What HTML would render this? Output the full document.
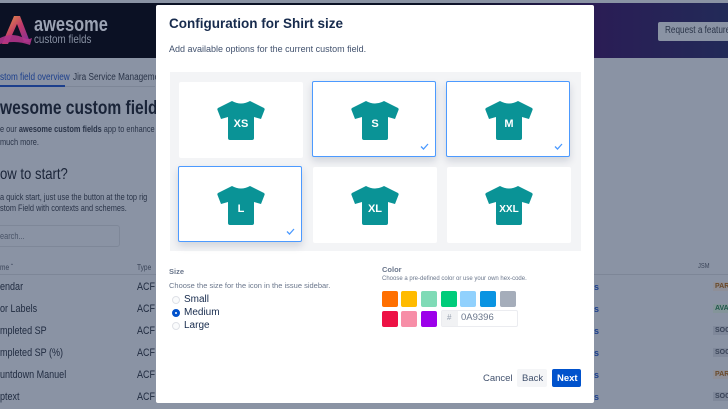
<!DOCTYPE html>
<html><head><meta charset="utf-8">
<style>
*{box-sizing:border-box;margin:0;padding:0}
body{width:728px;height:409px;overflow:hidden;position:relative;background:#8a93a4;font-family:"Liberation Sans",sans-serif;color:#1e2a44}
.abs{position:absolute}
.hdr{left:0;top:3px;width:728px;height:55px;background:linear-gradient(90deg,#0b1124 0%,#0b1124 60%,#2a1d55 82%,#222a58 100%)}
.t{position:absolute;white-space:nowrap}
.c{transform:scaleX(.82);transform-origin:0 0}
.modal{left:156px;top:5px;width:438px;height:398px;background:#fff;border-radius:2px}
.panel{left:170px;top:72px;width:411px;height:179px;background:#f3f4f6}
.card{position:absolute;width:124px;height:76px;background:#fff;border-radius:2px}
.card.sel{border:1px solid #4c9aff;box-shadow:0 4px 8px rgba(9,30,66,.15)}
.card svg.s{position:absolute;left:37px;top:18px}
.card svg.chk{position:absolute;right:6px;bottom:6px}
.sw{position:absolute;width:16px;height:16px;border-radius:2px}
.row{font-size:11px;color:#1f2a3f}
</style></head><body>
<div class="abs hdr"></div>
<svg class="abs" style="left:0;top:14px" width="34" height="32" viewBox="0 0 34 32"><defs><linearGradient id="g" x1="0" y1="0" x2="1" y2="1"><stop offset="0" stop-color="#e8a33a"/><stop offset=".5" stop-color="#c13a6a"/><stop offset="1" stop-color="#7a2fa0"/></linearGradient></defs><path d="M14 2 L20 2 L30 28 L24 28 L17 10 L8 30 L2 30 Z" fill="url(#g)"/><path d="M0 24 Q12 18 24 24 Q28 26 32 24 L30 31 Q22 28 14 28 Q6 28 0 30Z" fill="#b0348a" opacity=".9"/></svg>
<div class="t c" style="left:34px;top:14px;font-size:20px;font-weight:bold;color:#9ca3b3">awesome</div>
<div class="t c" style="left:34px;top:32px;font-size:12px;color:#8891a3">custom fields</div>
<div class="abs" style="left:658px;top:22px;width:75px;height:19px;background:#8a93a4;border-radius:2px"></div>
<div class="t c" style="left:665px;top:25px;font-size:10px;color:#2a3448">Request a feature</div>
<div class="abs" style="left:0;top:86px;width:155px;height:1px;background:#7d8697"></div>
<div class="t c" style="left:0;top:72px;font-size:10px;color:#1c3f8c">stom field overview</div>
<div class="abs" style="left:0;top:85px;width:65px;height:2px;background:#1c3f8c"></div>
<div class="t c" style="left:73px;top:72px;font-size:10px;color:#2a3448">Jira Service Managemen</div>
<div class="t c" style="left:0;top:98px;font-size:19px;font-weight:bold;color:#1a2438">wesome custom fields</div>
<div class="t c" style="left:0;top:124px;font-size:9px;color:#2a3448">e our <b>awesome custom fields</b> app to enhance y</div>
<div class="t c" style="left:0;top:137px;font-size:9px;color:#2a3448">much more.</div>
<div class="t c" style="left:0;top:166px;font-size:16px;color:#1a2438">ow to start?</div>
<div class="t c" style="left:0;top:192px;font-size:9px;color:#2a3448">a quick start, just use the button at the top rig</div>
<div class="t c" style="left:0;top:203px;font-size:9px;color:#2a3448">stom Field with contexts and schemes.</div>
<div class="abs" style="left:-3px;top:225px;width:123px;height:22px;border:1px solid #7e8798;border-radius:3px"></div>
<div class="t c" style="left:0;top:231px;font-size:9px;color:#4a5468">earch...</div>
<div class="t c" style="left:0;top:263px;font-size:8px;color:#3a4458">me ˆ</div>
<div class="t c" style="left:137px;top:263px;font-size:8px;color:#3a4458">Type</div>
<div class="abs" style="left:0;top:274px;width:728px;height:1px;background:#7d8697"></div>
<div class="t c" style="left:698px;top:263px;font-size:7px;color:#3a4458">JSM</div>
<div class="t row c" style="left:0;top:281px">endar</div><div class="t row c" style="left:137px;top:281px">ACF -</div>
<div class="t row c" style="left:0;top:303px">or Labels</div><div class="t row c" style="left:137px;top:303px">ACF -</div>
<div class="t row c" style="left:0;top:325px">mpleted SP</div><div class="t row c" style="left:137px;top:325px">ACF -</div>
<div class="t row c" style="left:0;top:347px">mpleted SP (%)</div><div class="t row c" style="left:137px;top:347px">ACF -</div>
<div class="t row c" style="left:0;top:369px">untdown Manuel</div><div class="t row c" style="left:137px;top:369px">ACF -</div>
<div class="t row c" style="left:0;top:391px">ptext</div><div class="t row c" style="left:137px;top:391px">ACF -</div>
<div class="t" style="left:594px;top:282px;font-size:9px;color:#1c3f8c;font-weight:bold">s</div>
<div class="t" style="left:594px;top:304px;font-size:9px;color:#1c3f8c;font-weight:bold">s</div>
<div class="t" style="left:594px;top:326px;font-size:9px;color:#1c3f8c;font-weight:bold">s</div>
<div class="t" style="left:594px;top:348px;font-size:9px;color:#1c3f8c;font-weight:bold">s</div>
<div class="t" style="left:594px;top:370px;font-size:9px;color:#1c3f8c;font-weight:bold">s</div>
<div class="t" style="left:594px;top:392px;font-size:9px;color:#1c3f8c;font-weight:bold">s</div>
<div class="t" style="left:713px;top:282px;font-size:7px;font-weight:bold;color:#6a4a2a;background:#8e8f98;padding:1px 2px">PART</div>
<div class="t" style="left:713px;top:304px;font-size:7px;font-weight:bold;color:#1f5a4a;background:#84959a;padding:1px 2px">AVAI</div>
<div class="t" style="left:713px;top:326px;font-size:7px;font-weight:bold;color:#3a4458;background:#7f889a;padding:1px 2px">SOON</div>
<div class="t" style="left:713px;top:348px;font-size:7px;font-weight:bold;color:#3a4458;background:#7f889a;padding:1px 2px">SOON</div>
<div class="t" style="left:713px;top:370px;font-size:7px;font-weight:bold;color:#6a4a2a;background:#8e8f98;padding:1px 2px">PART</div>
<div class="t" style="left:713px;top:392px;font-size:7px;font-weight:bold;color:#3a4458;background:#7f889a;padding:1px 2px">SOON</div>

<div class="abs modal"></div>
<div class="t" style="left:169px;top:16px;font-size:13.5px;font-weight:bold;color:#172b4d">Configuration for Shirt size</div>
<div class="t" style="left:169px;top:44px;font-size:9px;color:#42526e">Add available options for the current custom field.</div>
<div class="abs panel"></div>

<svg width="0" height="0" style="position:absolute"><defs><path id="sh" d="M16 1 Q25 6 34 1 L48 8 Q49 9 48.5 10 L45 19 L38 17 L38 38 Q38 40 36 40 L14 40 Q12 40 12 38 L12 17 L5 19 L1.5 10 Q1 9 2 8 Z" fill="#0a9396"/></defs></svg>

<div class="card" style="left:179px;top:82px"><svg class="s" width="50" height="41"><use href="#sh"/><text x="25" y="27" text-anchor="middle" font-family="Liberation Sans" font-weight="bold" font-size="11" fill="#fff">XS</text></svg></div>
<div class="card sel" style="left:312px;top:81px"><svg class="s" width="50" height="41"><use href="#sh"/><text x="25" y="27" text-anchor="middle" font-family="Liberation Sans" font-weight="bold" font-size="11" fill="#fff">S</text></svg><svg class="chk" width="9" height="7"><path d="M1 3.5 L3.5 6 L8 1" stroke="#4c9aff" stroke-width="1.3" fill="none"/></svg></div>
<div class="card sel" style="left:446px;top:81px"><svg class="s" width="50" height="41"><use href="#sh"/><text x="25" y="27" text-anchor="middle" font-family="Liberation Sans" font-weight="bold" font-size="11" fill="#fff">M</text></svg><svg class="chk" width="9" height="7"><path d="M1 3.5 L3.5 6 L8 1" stroke="#4c9aff" stroke-width="1.3" fill="none"/></svg></div>
<div class="card sel" style="left:178px;top:166px"><svg class="s" width="50" height="41"><use href="#sh"/><text x="25" y="27" text-anchor="middle" font-family="Liberation Sans" font-weight="bold" font-size="11" fill="#fff">L</text></svg><svg class="chk" width="9" height="7"><path d="M1 3.5 L3.5 6 L8 1" stroke="#4c9aff" stroke-width="1.3" fill="none"/></svg></div>
<div class="card" style="left:313px;top:167px"><svg class="s" width="50" height="41"><use href="#sh"/><text x="25" y="27" text-anchor="middle" font-family="Liberation Sans" font-weight="bold" font-size="11" fill="#fff">XL</text></svg></div>
<div class="card" style="left:447px;top:167px"><svg class="s" width="50" height="41"><use href="#sh"/><text x="25" y="27" text-anchor="middle" font-family="Liberation Sans" font-weight="bold" font-size="10" fill="#fff">XXL</text></svg></div>

<div class="t" style="left:169px;top:267px;font-size:7.5px;font-weight:bold;color:#6b778c">Size</div>
<div class="t" style="left:169px;top:281px;font-size:7.5px;color:#6b778c">Choose the size for the icon in the issue sidebar.</div>
<div class="abs" style="left:172px;top:296px;width:8px;height:8px;border-radius:50%;border:1px solid #dfe1e6;background:#fafbfc"></div>
<div class="t" style="left:184px;top:294px;font-size:10px;color:#172b4d">Small</div>
<div class="abs" style="left:172px;top:309px;width:8px;height:8px;border-radius:50%;background:#0052cc;border:2.5px solid #0052cc"></div>
<div class="abs" style="left:175px;top:312px;width:2px;height:2px;border-radius:50%;background:#fff"></div>
<div class="t" style="left:184px;top:307px;font-size:10px;color:#172b4d">Medium</div>
<div class="abs" style="left:172px;top:322px;width:8px;height:8px;border-radius:50%;border:1px solid #dfe1e6;background:#fafbfc"></div>
<div class="t" style="left:184px;top:320px;font-size:10px;color:#172b4d">Large</div>

<div class="t" style="left:382px;top:265px;font-size:7.5px;font-weight:bold;color:#6b778c">Color</div>
<div class="t" style="left:382px;top:276px;font-size:6px;color:#6b778c">Choose a pre-defined color or use your own hex-code.</div>
<div class="sw" style="left:382px;top:291px;background:#ff6f00"></div>
<div class="sw" style="left:401px;top:291px;background:#ffbb00"></div>
<div class="sw" style="left:421px;top:291px;background:#7fdbb6"></div>
<div class="sw" style="left:441px;top:291px;background:#00cc7a"></div>
<div class="sw" style="left:460px;top:291px;background:#91d1fd"></div>
<div class="sw" style="left:480px;top:291px;background:#0a94e2"></div>
<div class="sw" style="left:500px;top:291px;background:#a5adba"></div>
<div class="sw" style="left:382px;top:311px;background:#ed1245"></div>
<div class="sw" style="left:401px;top:311px;background:#f78ea7"></div>
<div class="sw" style="left:421px;top:311px;background:#9c00ea"></div>
<div class="abs" style="left:441px;top:310px;width:77px;height:17px;border:1px solid #ebecf0;border-radius:2px;background:#fff"></div>
<div class="abs" style="left:442px;top:311px;width:16px;height:15px;background:#f1f2f4"></div>
<div class="t" style="left:447px;top:313px;font-size:8px;color:#97a0af">#</div>
<div class="t" style="left:461px;top:312px;font-size:9.5px;color:#6b778c">0A9396</div>

<div class="t" style="left:483px;top:373px;font-size:9.5px;color:#42526e">Cancel</div>
<div class="abs" style="left:517px;top:369px;width:30px;height:18px;background:#f4f5f7;border-radius:2px"></div>
<div class="t" style="left:522px;top:373px;font-size:9.5px;color:#42526e">Back</div>
<div class="abs" style="left:552px;top:369px;width:29px;height:18px;background:#0052cc;border-radius:2px"></div>
<div class="t" style="left:557px;top:373px;font-size:9.5px;font-weight:bold;color:#fff">Next</div>
</body></html>
